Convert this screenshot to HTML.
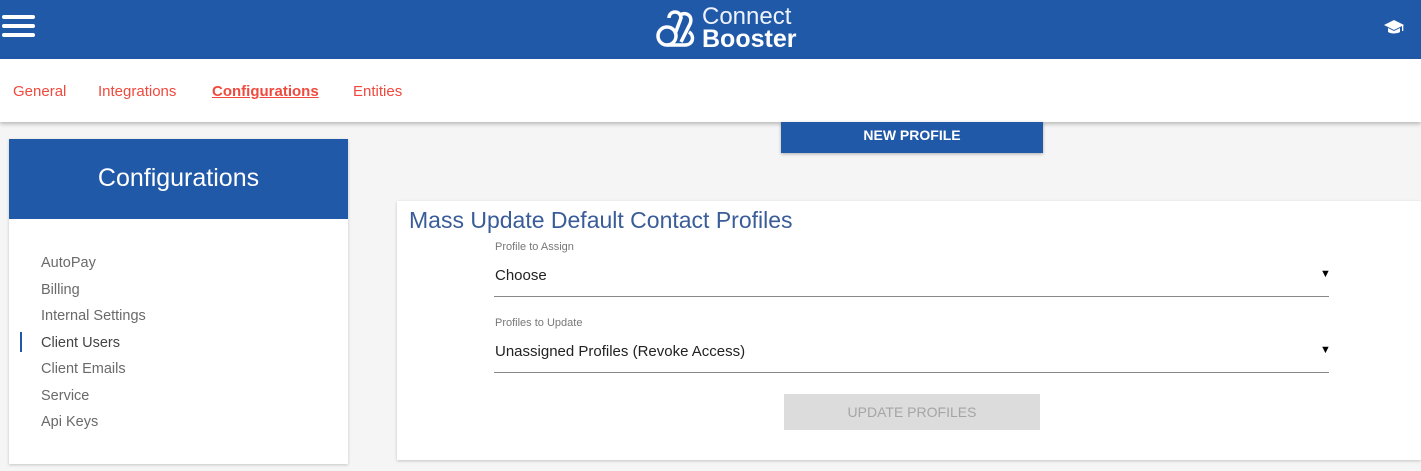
<!DOCTYPE html>
<html><head><style>
*{margin:0;padding:0;box-sizing:border-box}
body{width:1421px;height:471px;overflow:hidden;background:#f5f5f5;font-family:"Liberation Sans",sans-serif;position:relative}
.top{position:absolute;left:0;top:0;width:1421px;height:59px;background:#2159a9}
.nav{position:absolute;left:0;top:59px;width:1421px;height:63px;background:#fff;box-shadow:0 2px 4px rgba(0,0,0,.25)}
.nav a{position:absolute;top:24px;font-size:15px;color:#f0493e;text-decoration:none}
.side{position:absolute;left:9px;top:139px;width:339px;height:325px;background:#fff;box-shadow:0 1px 3px rgba(0,0,0,.2)}
.sh{height:80px;background:#2159a9;color:#fff;font-size:25px;text-align:center;line-height:78px;font-weight:300}
.side div.i{position:absolute;left:32px;font-size:14.5px;color:#6a6a6a}
.card{position:absolute;left:397px;top:201px;width:1024px;height:259px;background:#fff;box-shadow:0 1px 3px rgba(0,0,0,.2)}
.lbl{position:absolute;left:98px;font-size:11px;color:#777}
.sel{position:absolute;left:97px;width:835px;height:1px;background:#888}
.val{position:absolute;left:98px;font-size:15px;color:#222}
.arr{position:absolute;left:923px;font-size:11px;color:#000}
</style></head><body>
<div class="top">
<div style="position:absolute;left:2px;top:15px;width:33px;height:4px;background:#fff;border-radius:2px"></div>
<div style="position:absolute;left:2px;top:24px;width:33px;height:4px;background:#fff;border-radius:2px"></div>
<div style="position:absolute;left:2px;top:33px;width:33px;height:4px;background:#fff;border-radius:2px"></div>
<svg style="position:absolute;left:655px;top:8px" width="46" height="42" viewBox="0 0 46 42" fill="none" stroke="#fff" stroke-width="3.5"><path d="M14 10 C14 2 26 2 26 10 L20 26"/><path d="M24 8 C30 2 40 8 34 18 L26 34"/><ellipse cx="12" cy="28" rx="9" ry="9"/><path d="M12 37 L30 37 C38 37 40 28 34 24"/></svg>
<div style="position:absolute;left:702px;top:3px;color:#eef3fb;font-size:24px;line-height:28px">Connect</div>
<div style="position:absolute;left:702px;top:25px;color:#fff;font-size:25px;font-weight:bold;line-height:28px">Booster</div>
<svg style="position:absolute;left:1383px;top:19px" width="22" height="16" viewBox="0 0 22 16" fill="#fff"><path d="M11 1 L21 6 L11 11 L1 6Z"/><path d="M5 9 L5 13 C8 15 14 15 17 13 L17 9 L11 12Z"/><rect x="19" y="6" width="1.3" height="6"/></svg>
</div>
<div class="nav">
<a style="left:13px">General</a><a style="left:98px">Integrations</a>
<a style="left:212px;font-weight:bold;text-decoration:underline">Configurations</a><a style="left:353px">Entities</a>
</div>
<div style="position:absolute;left:781px;top:122px;width:262px;height:31px;background:#2159a9;color:#fff;font-size:14px;font-weight:bold;text-align:center;line-height:27px;box-shadow:0 1px 3px rgba(0,0,0,.3)">NEW PROFILE</div>
<div class="side"><div class="sh">Configurations</div>
<div class="i" style="top:116px">AutoPay</div>
<div class="i" style="top:143px">Billing</div>
<div class="i" style="top:169px">Internal Settings</div>
<div style="position:absolute;left:11px;top:193px;width:2px;height:20px;background:#2159a9"></div>
<div class="i" style="top:196px;color:#444">Client Users</div>
<div class="i" style="top:222px">Client Emails</div>
<div class="i" style="top:249px">Service</div>
<div class="i" style="top:275px">Api Keys</div>
</div>
<div class="card">
<div style="position:absolute;left:12px;top:6px;font-size:23px;color:#3a5c98">Mass Update Default Contact Profiles</div>
<div class="lbl" style="top:40px">Profile to Assign</div>
<div class="val" style="top:66px">Choose</div><div class="arr" style="top:67px">▼</div>
<div class="sel" style="top:95px"></div>
<div class="lbl" style="top:116px">Profiles to Update</div>
<div class="val" style="top:142px">Unassigned Profiles (Revoke Access)</div><div class="arr" style="top:143px">▼</div>
<div class="sel" style="top:171px"></div>
<div style="position:absolute;left:387px;top:193px;width:256px;height:36px;background:#dcdcdc;color:#a5a5a5;font-size:14px;text-align:center;line-height:36px">UPDATE PROFILES</div>
</div>
</body></html>
